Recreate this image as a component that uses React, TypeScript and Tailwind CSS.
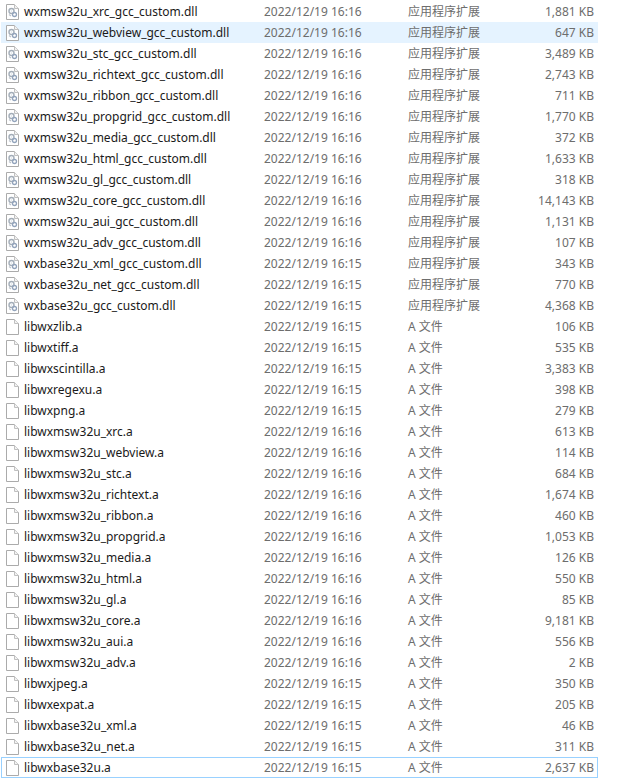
const DLL = "dll";
const rows: [string, string, string, string][] = [
  ["wxmsw32u_xrc_gcc_custom.dll", "16:16", DLL, "1,881 KB"],
  ["wxmsw32u_webview_gcc_custom.dll", "16:16", DLL, "647 KB"],
  ["wxmsw32u_stc_gcc_custom.dll", "16:16", DLL, "3,489 KB"],
  ["wxmsw32u_richtext_gcc_custom.dll", "16:16", DLL, "2,743 KB"],
  ["wxmsw32u_ribbon_gcc_custom.dll", "16:16", DLL, "711 KB"],
  ["wxmsw32u_propgrid_gcc_custom.dll", "16:16", DLL, "1,770 KB"],
  ["wxmsw32u_media_gcc_custom.dll", "16:16", DLL, "372 KB"],
  ["wxmsw32u_html_gcc_custom.dll", "16:16", DLL, "1,633 KB"],
  ["wxmsw32u_gl_gcc_custom.dll", "16:16", DLL, "318 KB"],
  ["wxmsw32u_core_gcc_custom.dll", "16:16", DLL, "14,143 KB"],
  ["wxmsw32u_aui_gcc_custom.dll", "16:16", DLL, "1,131 KB"],
  ["wxmsw32u_adv_gcc_custom.dll", "16:16", DLL, "107 KB"],
  ["wxbase32u_xml_gcc_custom.dll", "16:15", DLL, "343 KB"],
  ["wxbase32u_net_gcc_custom.dll", "16:15", DLL, "770 KB"],
  ["wxbase32u_gcc_custom.dll", "16:15", DLL, "4,368 KB"],
  ["libwxzlib.a", "16:15", "a", "106 KB"],
  ["libwxtiff.a", "16:15", "a", "535 KB"],
  ["libwxscintilla.a", "16:15", "a", "3,383 KB"],
  ["libwxregexu.a", "16:15", "a", "398 KB"],
  ["libwxpng.a", "16:15", "a", "279 KB"],
  ["libwxmsw32u_xrc.a", "16:16", "a", "613 KB"],
  ["libwxmsw32u_webview.a", "16:16", "a", "114 KB"],
  ["libwxmsw32u_stc.a", "16:16", "a", "684 KB"],
  ["libwxmsw32u_richtext.a", "16:16", "a", "1,674 KB"],
  ["libwxmsw32u_ribbon.a", "16:16", "a", "460 KB"],
  ["libwxmsw32u_propgrid.a", "16:16", "a", "1,053 KB"],
  ["libwxmsw32u_media.a", "16:16", "a", "126 KB"],
  ["libwxmsw32u_html.a", "16:16", "a", "550 KB"],
  ["libwxmsw32u_gl.a", "16:16", "a", "85 KB"],
  ["libwxmsw32u_core.a", "16:16", "a", "9,181 KB"],
  ["libwxmsw32u_aui.a", "16:16", "a", "556 KB"],
  ["libwxmsw32u_adv.a", "16:16", "a", "2 KB"],
  ["libwxjpeg.a", "16:15", "a", "350 KB"],
  ["libwxexpat.a", "16:15", "a", "205 KB"],
  ["libwxbase32u_xml.a", "16:15", "a", "46 KB"],
  ["libwxbase32u_net.a", "16:15", "a", "311 KB"],
  ["libwxbase32u.a", "16:15", "a", "2,637 KB"],
];

function FileIcon({ dll }: { dll: boolean }) {
  return (
    <svg width="13" height="16" viewBox="0 0 13 16" className="shrink-0">
      <path d="M0.5 0.5H8.5L12.5 4.5V15.5H0.5Z" fill="#fff" stroke="#ababab" />
      <path d="M8.5 0.5V4.5H12.5" fill="#f2f2f2" stroke="#c0c0c0" />
      {dll && (
        <g fill="none">
          <circle cx="5.5" cy="7" r="2.5" stroke="#a3adb8" strokeWidth="1.4" />
          <circle cx="5.5" cy="7" r="0.9" fill="#e2e8ee" />
          <circle cx="8.5" cy="10.5" r="2" stroke="#93a4bc" strokeWidth="1.3" />
          <path d="M3 10.5l2 1.5" stroke="#bcc3cb" strokeWidth="1.2" />
        </g>
      )}
    </svg>
  );
}

export default function App() {
  return (
    <div className="w-[618px] h-[784px] overflow-hidden bg-white pt-px font-['Noto_Sans','Noto_Sans_CJK_SC',sans-serif] text-xs">
      {rows.map(([name, time, kind, size], i) => {
        const hover = i === 1;
        const selected = i === rows.length - 1;
        return (
          <div
            key={name}
            className={`flex items-center h-[21px] w-[597px] ml-px ${
              hover ? "bg-[#e5f3ff]" : selected ? "border border-[#99d1ff]" : ""
            }`}
          >
            <div className={`flex items-center shrink-0 ${selected ? "w-[261px] pl-1" : "w-[262px] pl-[5px]"}`}>
              <FileIcon dll={kind === DLL} />
              <span className="ml-[5px] text-[#1a1a1a] whitespace-nowrap">{name}</span>
            </div>
            <span className="w-[145px] shrink-0 pl-px text-[#6d6d6d] whitespace-nowrap">{`2022/12/19 ${time}`}</span>
            <span className="w-[99px] shrink-0 text-[#6d6d6d] whitespace-nowrap">
              {kind === DLL ? "应用程序扩展" : "A 文件"}
            </span>
            <span className="w-[87px] shrink-0 text-right text-[#6d6d6d] whitespace-nowrap">{size}</span>
          </div>
        );
      })}
    </div>
  );
}
